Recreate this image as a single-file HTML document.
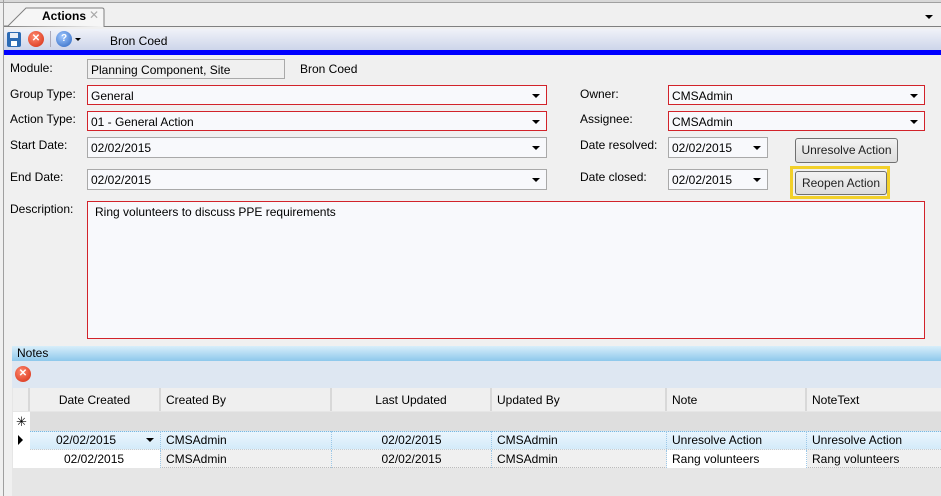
<!DOCTYPE html><html><head><style>
*{margin:0;padding:0;box-sizing:border-box}
body{width:941px;height:496px;background:#f0f0f0;font-family:"Liberation Sans",sans-serif;font-size:12px;color:#000;position:relative;overflow:hidden}
.a{position:absolute}
.lbl{position:absolute;font-size:12px}
.box{position:absolute;background:#f8f9fc;border:1px solid #d2232a;padding:3px 0 0 3px;font-size:12px}
.g{border-color:#a9a9a9}
.dd::after{content:"";position:absolute;right:6px;top:8px;border-left:4px solid transparent;border-right:4px solid transparent;border-top:4px solid #000}
.btn{position:absolute;border:1px solid #707070;border-radius:3px;background:linear-gradient(#f2f2f2,#dddddd);text-align:center;font-size:12px;color:#222}
.hd{position:absolute;top:388px;height:23px;background:#efefef;border-right:2px solid #d8d8d8;padding:5px 0 0 5px;font-size:12px}
.c{position:absolute;height:18px;padding:2px 0 0 5px;font-size:12px;border-right:1px dotted #9cc8e8}
</style></head><body>
<div class="a" style="left:0;top:0;width:941px;height:3px;background:#d8d8d8;border-bottom:1px solid #a0a0a0"></div>
<div class="a" style="left:3px;top:0;width:1px;height:496px;background:#a0a0a0"></div>
<div class="a" style="left:4px;top:26px;width:937px;height:1px;background:#808080"></div>
<svg class="a" style="left:4px;top:6px" width="102" height="22"><path d="M0 20 L4 20 L22 2 L98 2 Q100 2 100 4 L100 21" fill="#f6f6f6" stroke="#808080"/></svg>
<div class="a" style="left:42px;top:9px;font-weight:bold;font-size:12px">Actions</div>
<div class="a" style="left:89px;top:8px;color:#aaa;font-size:12px">✕</div>
<div class="a" style="left:925px;top:15px;border-left:4px solid transparent;border-right:4px solid transparent;border-top:4px solid #000"></div>
<div class="a" style="left:4px;top:29px;width:937px;height:21px;background:linear-gradient(#f0f2f8,#cdd5ea)"></div>
<div class="a" style="left:7px;top:32px;width:14px;height:15px;background:#2c6bb5;border-radius:2px"><div class="a" style="left:3px;top:1px;width:8px;height:5px;background:#e8eef8"></div><div class="a" style="left:4px;top:9px;width:6px;height:5px;background:#fff"></div></div>
<div class="a" style="left:28px;top:31px;width:16px;height:16px;border-radius:50%;background:radial-gradient(circle at 40% 35%,#ff8a70,#d42a10);color:#fff;font-size:10px;font-weight:bold;text-align:center;line-height:16px">✕</div>
<div class="a" style="left:50px;top:31px;width:1px;height:16px;background:#aab"></div>
<div class="a" style="left:56px;top:31px;width:16px;height:16px;border-radius:50%;background:radial-gradient(circle at 40% 35%,#a0c8ff,#2a64c0);color:#fff;font-size:10px;font-weight:bold;text-align:center;line-height:16px">?</div>
<div class="a" style="left:75px;top:38px;border-left:3px solid transparent;border-right:3px solid transparent;border-top:3px solid #000"></div>
<div class="a" style="left:110px;top:34px">Bron Coed</div>
<div class="a" style="left:4px;top:50px;width:937px;height:5px;background:#0000ff"></div>

<div class="lbl" style="left:10px;top:61px">Module:</div>
<div class="box g" style="left:87px;top:59px;width:198px;height:20px;background:#f0f0f0">Planning Component, Site</div>
<div class="lbl" style="left:300px;top:62px">Bron Coed</div>
<div class="lbl" style="left:10px;top:87px">Group Type:</div>
<div class="box dd" style="left:87px;top:85px;width:460px;height:20px">General</div>
<div class="lbl" style="left:10px;top:112px">Action Type:</div>
<div class="box dd" style="left:87px;top:111px;width:460px;height:20px">01 - General Action</div>
<div class="lbl" style="left:10px;top:138px">Start Date:</div>
<div class="box g dd" style="left:87px;top:137px;width:460px;height:21px">02/02/2015</div>
<div class="lbl" style="left:10px;top:170px">End Date:</div>
<div class="box g dd" style="left:87px;top:169px;width:460px;height:21px">02/02/2015</div>
<div class="lbl" style="left:580px;top:87px">Owner:</div>
<div class="box dd" style="left:668px;top:85px;width:257px;height:20px">CMSAdmin</div>
<div class="lbl" style="left:580px;top:112px">Assignee:</div>
<div class="box dd" style="left:668px;top:111px;width:257px;height:20px">CMSAdmin</div>
<div class="lbl" style="left:580px;top:138px">Date resolved:</div>
<div class="box g dd" style="left:668px;top:137px;width:100px;height:21px">02/02/2015</div>
<div class="lbl" style="left:580px;top:170px">Date closed:</div>
<div class="box g dd" style="left:668px;top:169px;width:100px;height:21px">02/02/2015</div>
<div class="btn" style="left:795px;top:138px;width:103px;height:25px;line-height:23px">Unresolve Action</div>
<div class="a" style="left:790px;top:166px;width:100px;height:33px;border:3px solid #f2d02a"></div>
<div class="btn" style="left:795px;top:171px;width:92px;height:24px;line-height:22px">Reopen Action</div>
<div class="lbl" style="left:10px;top:202px">Description:</div>
<div class="box" style="left:87px;top:201px;width:838px;height:138px;padding:3px 0 0 7px">Ring volunteers to discuss PPE requirements</div>

<div class="a" style="left:12px;top:346px;width:929px;height:15px;background:linear-gradient(#d8eefa,#8ec8ec);padding:0 0 0 5px;font-size:12px">Notes</div>
<div class="a" style="left:12px;top:361px;width:929px;height:27px;background:#dee7f2"></div>
<div class="a" style="left:15px;top:366px;width:16px;height:16px;border-radius:50%;background:radial-gradient(circle at 40% 35%,#ff8a70,#d42a10);color:#fff;font-size:10px;font-weight:bold;text-align:center;line-height:16px">✕</div>
<div class="a" style="left:12px;top:388px;width:929px;height:108px;background:#e6e6e6"></div>
<div class="hd" style="left:13px;width:17px"></div>
<div class="hd" style="left:30px;width:131px;text-align:center;padding-left:0">Date Created</div>
<div class="hd" style="left:161px;width:171px">Created By</div>
<div class="hd" style="left:332px;width:160px;text-align:center;padding-left:0">Last Updated</div>
<div class="hd" style="left:492px;width:175px">Updated By</div>
<div class="hd" style="left:667px;width:140px">Note</div>
<div class="hd" style="left:807px;width:134px;border-right:0">NoteText</div>
<div class="a" style="left:13px;top:412px;width:928px;height:19px;background:#dedede"></div>
<div class="a" style="left:13px;top:412px;width:17px;height:19px;background:#fff;text-align:center;font-size:13px;line-height:19px">✳</div>
<div class="a" style="left:13px;top:431px;width:17px;height:37px;background:#fff"></div>
<div class="a" style="left:18px;top:435px;border-top:5px solid transparent;border-bottom:5px solid transparent;border-left:5px solid #000"></div>
<div class="a" style="left:30px;top:431px;width:911px;height:19px;background:linear-gradient(#eaf5fd,#d4ebf9);border-top:1px dotted #7ab8e0;border-bottom:1px dotted #ccc"></div>
<div class="a" style="left:30px;top:450px;width:911px;height:18px;background:#f0f0f0;border-bottom:1px dotted #bbb"></div>
<div class="a" style="left:30px;top:450px;width:130px;height:18px;background:#fff"></div>
<div class="a" style="left:667px;top:450px;width:140px;height:18px;background:#fff"></div>
<div class="c" style="left:30px;top:431px;width:131px;padding-left:26px">02/02/2015</div>
<div class="a" style="left:146px;top:438px;border-left:4px solid transparent;border-right:4px solid transparent;border-top:4px solid #000"></div>
<div class="c" style="left:161px;top:431px;width:171px">CMSAdmin</div>
<div class="c" style="left:332px;top:431px;width:160px;text-align:center;padding-left:0">02/02/2015</div>
<div class="c" style="left:492px;top:431px;width:175px">CMSAdmin</div>
<div class="c" style="left:667px;top:431px;width:140px">Unresolve Action</div>
<div class="c" style="left:807px;top:431px;width:134px;border:0">Unresolve Action</div>
<div class="c" style="left:30px;top:450px;width:131px;padding-left:34px">02/02/2015</div>
<div class="c" style="left:161px;top:450px;width:171px">CMSAdmin</div>
<div class="c" style="left:332px;top:450px;width:160px;text-align:center;padding-left:0">02/02/2015</div>
<div class="c" style="left:492px;top:450px;width:175px">CMSAdmin</div>
<div class="c" style="left:667px;top:450px;width:140px">Rang volunteers</div>
<div class="c" style="left:807px;top:450px;width:134px;border:0">Rang volunteers</div>
</body></html>
